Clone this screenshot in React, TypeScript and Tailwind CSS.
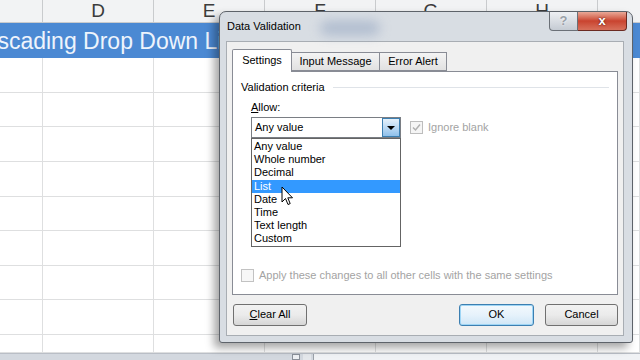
import React from 'react';

const F = "font-['Liberation_Sans',Arial,sans-serif]";

function GridRow({ h }: { h: number }) {
  const widths = [43, 111, 111, 111, 111, 111, 42];
  return (
    <div className="flex shrink-0" style={{ height: h }}>
      {widths.map((w, i) => (
        <div key={i} className="h-full shrink-0 border-r border-b border-[#dedfe0]" style={{ width: w }} />
      ))}
    </div>
  );
}

function Cursor() {
  return (
    <svg width="13" height="20" viewBox="0 0 13 20" className="absolute left-[29px] top-[47px]">
      <path d="M1 1 L1 16 L4.5 12.5 L7 18.5 L9.2 17.6 L6.8 11.8 L11.5 11.8 Z" fill="#fff" stroke="#000" strokeWidth="1" strokeLinejoin="round" />
    </svg>
  );
}

export default function App() {
  const cols = ['D', 'E', 'F', 'G', 'H'];
  const rows = [35, 34, 35, 35, 34, 35, 34, 35, 18];
  const items = ['Any value', 'Whole number', 'Decimal', 'List', 'Date', 'Time', 'Text length', 'Custom'];
  return (
    <div className={`relative w-[640px] h-[360px] overflow-hidden bg-white ${F}`}>
      {/* Spreadsheet */}
      <div className="flex flex-col h-full">
        <div className="flex h-[23px] shrink-0 bg-[#f2f3f4] border-b border-[#c9cbcd]">
          <div className="w-[43px] shrink-0 border-r border-[#c9cbcd]" />
          {cols.map((c) => (
            <div key={c} className="w-[111px] shrink-0 border-r border-[#c9cbcd] flex items-end justify-center pb-[2px] text-[19px] leading-none text-[#3c3c3c]">
              {c}
            </div>
          ))}
          <div className="flex-1" />
        </div>
        <div className="h-[35px] shrink-0 bg-[#4b89d3] overflow-hidden whitespace-nowrap flex items-end pb-[5px]">
          <span className="ml-[-32px] text-[23px] leading-none text-[#eef4fc]">Cascading Drop Down List</span>
        </div>
        {rows.map((h, i) => (
          <GridRow key={i} h={h} />
        ))}
        <div className="flex h-[7px] shrink-0 bg-[#d3d8df] border-t border-[#b9bec6]">
          <div className="w-[292px] shrink-0" />
          <div className="w-[8px] h-full bg-[#eef0f3] border border-[#8a9099]" />
          <div className="w-[3px]" />
          <div className="w-[8px] h-full bg-[#e4e7eb]" />
          <div className="flex-1 ml-[2px] bg-[#f0f2f5] border-l border-[#9aa0a8]" />
        </div>
      </div>

      {/* Dialog */}
      <div className="absolute left-[219px] top-[11px] w-[414px] h-[332px] rounded-t-[7px] rounded-b-[3px] border border-[#5e636a] bg-[#d8dde3] shadow-[-5px_5px_9px_rgba(0,0,0,0.35)] flex flex-col">
        <div className="relative h-[29px] shrink-0 flex items-start">
          <div className="absolute left-[100px] top-[9px] w-[60px] h-[14px] rounded-full bg-[#9eaec6] blur-[6px] opacity-70" />
          <span className="relative mt-[6px] ml-[7px] text-[11px] text-black">Data Validation</span>
          <div className="flex-1" />
          <div className="relative mr-[5px] flex">
            <div className="w-[29px] h-[19px] rounded-bl-[4px] border border-t-0 border-[#6b7077] bg-gradient-to-b from-[#eef0f3] to-[#c5cbd3] flex items-center justify-center text-[13px] font-bold text-[#9aa0a8] [text-shadow:0_0_2px_#fff]">
              ?
            </div>
            <div className="w-[49px] h-[19px] rounded-br-[4px] border border-l-0 border-t-0 border-[#6b2a22] bg-gradient-to-b from-[#e8a897] via-[#c9432f] to-[#d7705b] flex items-center justify-center text-[13px] font-bold text-white [text-shadow:0_0_2px_#3a0b05]">
              x
            </div>
          </div>
        </div>
        <div className="ml-[6px] mr-[8px] h-[295px] bg-[#f0f0f0] border border-[#a8adb3] px-[5px] pt-[7px] flex flex-col text-[11px] text-black">
          {/* Tabs */}
          <div className="flex items-end h-[22px] shrink-0">
            <div className="relative z-10 mb-[-1px] w-[60px] h-[23px] bg-white border border-b-0 border-[#898c95] rounded-t-[2px] flex items-center justify-center pb-[1px]">
              Settings
            </div>
            <div className="w-[88px] h-[19px] bg-gradient-to-b from-[#f4f4f4] to-[#e1e1e1] border border-l-0 border-[#898c95] flex items-center justify-center">
              Input Message
            </div>
            <div className="w-[67px] h-[19px] bg-gradient-to-b from-[#f4f4f4] to-[#e1e1e1] border border-l-0 border-[#898c95] flex items-center justify-center">
              Error Alert
            </div>
          </div>
          {/* Panel */}
          <div className="relative h-[224px] shrink-0 bg-white border border-[#898c95] flex flex-col">
            <div className="mt-[8px] ml-[8px] mr-[8px] flex items-center gap-[8px] h-[14px]">
              <span>Validation criteria</span>
              <div className="flex-1 h-px bg-[#dfe3e8]" />
            </div>
            <div className="mt-[6px] ml-[18px] h-[14px] leading-[14px]">
              <span className="underline">A</span>llow:
            </div>
            <div className="mt-[3px] ml-[18px] flex items-start">
              <div className="relative w-[150px] h-[21px] border border-[#7a7e84] bg-white flex items-center">
                <span className="ml-[3px] flex-1 pb-[1px]">Any value</span>
                <div className="w-[18px] h-[19px] border border-[#3c7fb1] bg-gradient-to-b from-[#e5f1fb] via-[#bcdaf4] to-[#8fc0ea] flex items-center justify-center">
                  <div className="w-0 h-0 border-l-[4px] border-r-[4px] border-t-[4px] border-l-transparent border-r-transparent border-t-black" />
                </div>
                {/* Dropdown list */}
                <div className="absolute left-[-1px] top-[20px] w-[150px] border border-[#646464] bg-white z-20 flex flex-col pt-[1px]">
                  {items.map((it) => (
                    <div
                      key={it}
                      className={`h-[13.2px] leading-[12px] pl-[2px] ${it === 'List' ? 'bg-[#3399ff] text-white' : 'text-black'}`}
                    >
                      {it}
                    </div>
                  ))}
                  <Cursor />
                </div>
              </div>
              <div className="ml-[9px] mt-[2px] flex items-center gap-[5px] text-[#a3a3a3]">
                <div className="w-[13px] h-[13px] border border-[#bdbdbd] bg-[#f5f5f5] flex items-center justify-center">
                  <svg width="9" height="9" viewBox="0 0 9 9">
                    <path d="M1 4.5 L3.5 7 L8 1.5" fill="none" stroke="#b0b0b0" strokeWidth="1.5" />
                  </svg>
                </div>
                <span className="pb-[1px]">Ignore blank</span>
              </div>
            </div>
            <div className="flex-1" />
            <div className="mb-[10px] ml-[8px] flex items-center gap-[5px] text-[#a3a3a3]">
              <div className="w-[13px] h-[13px] border border-[#c2c2c2] bg-[#f7f7f7]" />
              <span className="pb-[1px]">Apply these changes to all other cells with the same settings</span>
            </div>
          </div>
          {/* Buttons */}
          <div className="mt-[9px] flex items-center">
            <button className="ml-[1px] w-[74px] h-[22px] rounded-[3px] border border-[#707070] bg-gradient-to-b from-[#f2f2f2] via-[#ebebeb] to-[#d6d6d6] text-[11px] pb-[1px]">
              <span className="underline">C</span>lear All
            </button>
            <div className="flex-1" />
            <button className="w-[75px] h-[22px] rounded-[3px] border border-[#3c7fb1] bg-gradient-to-b from-[#f3f9fd] via-[#e6f2fb] to-[#cfe6f6] text-[11px] pb-[1px] shadow-[inset_0_0_0_1px_#9ed5f5]">
              OK
            </button>
            <button className="ml-[11px] w-[73px] h-[22px] rounded-[3px] border border-[#707070] bg-gradient-to-b from-[#f2f2f2] via-[#ebebeb] to-[#d6d6d6] text-[11px] pb-[1px]">
              Cancel
            </button>
          </div>
        </div>
      </div>
    </div>
  );
}
